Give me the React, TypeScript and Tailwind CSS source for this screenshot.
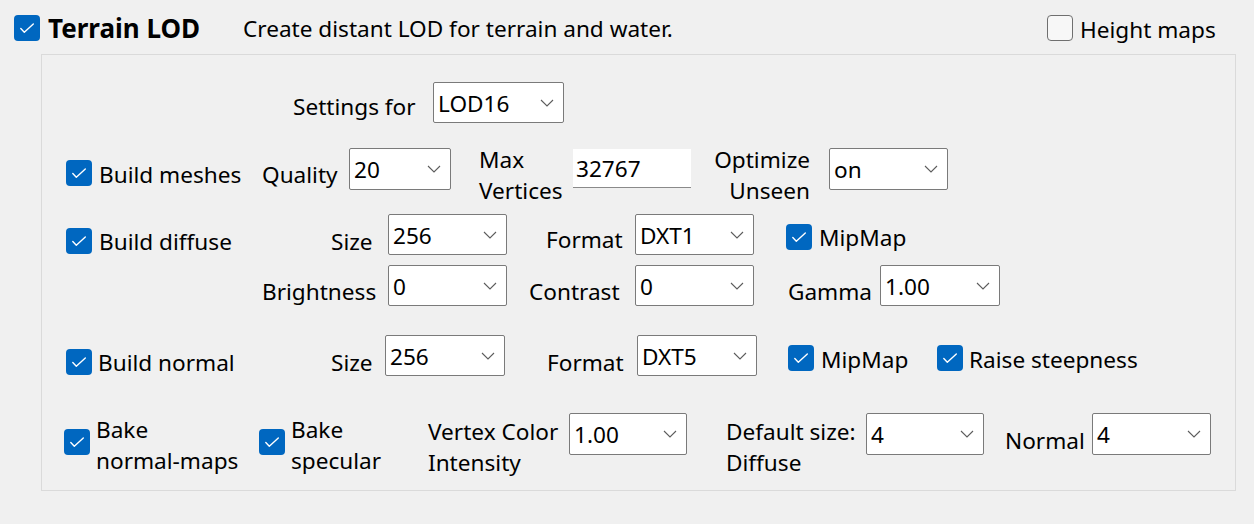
import type { ReactNode } from "react";

function Check({ checked = true }: { checked?: boolean }) {
  if (!checked) {
    return <span className="block h-[26px] w-[26px] shrink-0 rounded-[4px] border border-[#6f6f6f] bg-[#f7f7f7]" />;
  }
  return (
    <span className="grid h-[26px] w-[26px] shrink-0 place-items-center rounded-[4px] bg-[#0067c0]">
      <svg width="26" height="26" viewBox="0 0 26 26" fill="none">
        <path d="M6.8 13.6 L10.3 17.2 L19.3 9" stroke="white" strokeWidth="1.4" strokeLinecap="round" strokeLinejoin="round" />
      </svg>
    </span>
  );
}

function Select({ value, className }: { value: string; className: string }) {
  return (
    <div className={`flex shrink-0 items-center justify-between rounded-[2px] border border-[#7a7a7a] bg-white pl-[4px] pr-[9px] ${className}`}>
      <span className="pt-[3px] leading-none">{value}</span>
      <svg width="14" height="8" viewBox="0 0 14 8" fill="none">
        <path d="M1 1 L7 7 L13 1" stroke="#5c5c5c" strokeWidth="1.1" />
      </svg>
    </div>
  );
}

function Label({ children, className }: { children: ReactNode; className: string }) {
  return <span className={`shrink-0 whitespace-nowrap leading-[32px] ${className}`}>{children}</span>;
}

function Two({ a, b, className }: { a: string; b: string; className: string }) {
  return (
    <div className={`shrink-0 whitespace-nowrap leading-[31px] ${className}`}>
      <div>{a}</div>
      <div>{b}</div>
    </div>
  );
}

export default function App() {
  return (
    <div className="h-[524px] w-[1254px] overflow-hidden bg-[#f0f0f0] pt-[15px] font-['Noto_Sans',sans-serif] text-[22.6px] text-black">
      <div className="flex h-[26px] items-start">
        <span className="ml-[14px]">
          <Check />
        </span>
        <span className="ml-[8px] w-[195px] shrink-0 text-[26px] font-bold leading-[26px]">Terrain LOD</span>
        <span className="mt-[1px] w-[804px] shrink-0 leading-[26px]">Create distant LOD for terrain and water.</span>
        <Check checked={false} />
        <span className="ml-[7px] mt-[2px] leading-[26px]">Height maps</span>
      </div>

      <div className="ml-[41px] mt-[13px] h-[437px] w-[1195px] border border-[#dadada]">
        {/* settings for */}
        <div className="mt-[27px] flex h-[41px] items-start">
          <Label className="ml-[251px] mt-[9px] w-[140px]">Settings for</Label>
          <Select value="LOD16" className="h-[41px] w-[131px]" />
        </div>

        {/* meshes */}
        <div className="mt-[20px] flex h-[62px] items-start">
          <span className="ml-[24px] mt-[17px]">
            <Check />
          </span>
          <Label className="ml-[7px] mt-[16px] w-[163px]">Build meshes</Label>
          <Label className="mt-[16px] w-[87px]">Quality</Label>
          <Select value="20" className="mt-[5px] h-[42px] w-[102px]" />
          <Two a="Max" b="Vertices" className="ml-[28px] mt-[1px] w-[94px]" />
          <div className="mt-[6px] flex h-[39px] w-[118px] shrink-0 items-center border-b border-[#8a8a8a] bg-white pl-[3px] leading-none">
            <span className="pt-[3px]">32767</span>
          </div>
          <div className="mt-[1px] w-[138px] shrink-0 whitespace-nowrap pr-[19px] text-right leading-[31px]">
            <div>Optimize</div>
            <div>Unseen</div>
          </div>
          <Select value="on" className="mt-[5px] h-[42px] w-[119px]" />
        </div>

        {/* diffuse */}
        <div className="mt-[9px] flex h-[41px] items-start">
          <span className="ml-[24px] mt-[14px]">
            <Check />
          </span>
          <Label className="ml-[7px] mt-[12px] w-[232px]">Build diffuse</Label>
          <Label className="mt-[12px] w-[57px]">Size</Label>
          <Select value="256" className="h-[41px] w-[119px]" />
          <Label className="ml-[39px] mt-[10px] w-[89px]">Format</Label>
          <Select value="DXT1" className="h-[41px] w-[119px]" />
          <span className="ml-[32px] mt-[10px]">
            <Check />
          </span>
          <Label className="ml-[7px] mt-[8px]">MipMap</Label>
        </div>

        <div className="mt-[10px] flex h-[41px] items-start">
          <Label className="ml-[220px] mt-[11px] w-[126px]">Brightness</Label>
          <Select value="0" className="h-[41px] w-[119px]" />
          <Label className="ml-[22px] mt-[11px] w-[106px]">Contrast</Label>
          <Select value="0" className="h-[41px] w-[119px]" />
          <Label className="ml-[34px] mt-[11px] w-[92px]">Gamma</Label>
          <Select value="1.00" className="h-[41px] w-[120px]" />
        </div>

        {/* normal */}
        <div className="mt-[29px] flex h-[41px] items-start">
          <span className="ml-[24px] mt-[14px]">
            <Check />
          </span>
          <Label className="ml-[6px] mt-[12px] w-[233px]">Build normal</Label>
          <Label className="mt-[12px] w-[54px]">Size</Label>
          <Select value="256" className="h-[41px] w-[120px]" />
          <Label className="ml-[42px] mt-[12px] w-[90px]">Format</Label>
          <Select value="DXT5" className="h-[41px] w-[120px]" />
          <span className="ml-[31px] mt-[10px]">
            <Check />
          </span>
          <Label className="ml-[7px] mt-[9px] w-[116px]">MipMap</Label>
          <span className="mt-[10px]">
            <Check />
          </span>
          <Label className="ml-[6px] mt-[9px]">Raise steepness</Label>
        </div>

        {/* bake */}
        <div className="mt-[37px] flex h-[63px] items-start">
          <span className="ml-[22px] mt-[16px]">
            <Check />
          </span>
          <Two a="Bake" b="normal-maps" className="ml-[6px] mt-[1px] w-[163px]" />
          <span className="mt-[16px]">
            <Check />
          </span>
          <Two a="Bake" b="specular" className="ml-[6px] mt-[1px] w-[137px]" />
          <Two a="Vertex Color" b="Intensity" className="mt-[3px] w-[141px]" />
          <Select value="1.00" className="h-[42px] w-[118px]" />
          <Two a="Default size:" b="Diffuse" className="ml-[39px] mt-[3px] w-[140px]" />
          <Select value="4" className="h-[42px] w-[118px]" />
          <Label className="ml-[21px] mt-[12px] w-[87px]">Normal</Label>
          <Select value="4" className="h-[42px] w-[119px]" />
        </div>
      </div>
    </div>
  );
}
